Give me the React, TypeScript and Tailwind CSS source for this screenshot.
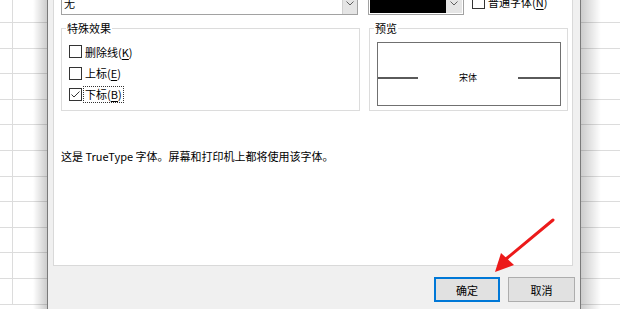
import React from 'react';

const ROWS = Array.from({ length: 11 });

const SheetStrip: React.FC<{ side: 'left' | 'right' }> = ({ side }) => (
    <div className={`relative h-full overflow-hidden bg-white ${side === 'left' ? 'w-[47px]' : 'flex-1'}`}>
        <div className="flex flex-col">
            <div className="flex h-[23px] border-b border-[#dcdcdc]">
                {side === 'left' && <div className="w-[13px] border-r border-[#dcdcdc]" />}
            </div>
            {ROWS.map((_, i) => (
                <div key={i} className="flex h-[25.6px] border-b border-[#dcdcdc]">
                    {side === 'left' && <div className="w-[13px] border-r border-[#dcdcdc]" />}
                </div>
            ))}
        </div>
        {/* dialog drop shadow over the grid */}
        {side === 'left' ? (
            <div className="absolute inset-y-0 right-0 w-[14px] bg-gradient-to-r from-transparent to-black/20" />
        ) : (
            <div className="absolute inset-y-0 left-0 w-[20px] bg-gradient-to-r from-black/20 to-transparent" />
        )}
    </div>
);

const Key: React.FC<{ k: string }> = ({ k }) => (
    <span>
        (<span className="underline underline-offset-2">{k}</span>)
    </span>
);

const CheckBox: React.FC<{ checked?: boolean }> = ({ checked }) => (
    <div className="w-[13px] h-[13px] shrink-0 border border-[#333333] bg-white">
        {checked && (
            <svg width="11" height="11" viewBox="0 0 11 11">
                <polyline points="1.5,5.5 4,8 9.5,2.5" fill="none" stroke="#333333" strokeWidth="1" />
            </svg>
        )}
    </div>
);

const Chevron = () => (
    <svg width="8" height="5" viewBox="0 0 8 5">
        <polyline points="0.5,0.5 4,4 7.5,0.5" fill="none" stroke="#606060" strokeWidth="1" />
    </svg>
);

const App: React.FC = () => {
    return (
        <div className="relative flex w-[620px] h-[309px] overflow-hidden bg-white text-[11px] text-black font-['Noto_Sans_CJK_SC',sans-serif]">
            <SheetStrip side="left" />

            {/* Font dialog */}
            <div className="flex flex-col w-[534px] h-full shrink-0 border-x border-[#7a7a7a] bg-[#f0f0f0]">
                <div className="ml-[5px] mr-[7px] h-[266px] border-x border-b border-[#d9d9d9] bg-white pl-[7px] flex flex-col">
                    {/* top row: underline / colour / normal font */}
                    <div className="flex items-start mt-[-8px] h-[23px]">
                        <div className="flex w-[297px] h-[23px] border border-[#a2a2a2] bg-white">
                            <div className="flex-1 pl-[2px] pt-[4px] leading-[12px]">无</div>
                            <div className="w-[15px] h-full bg-[#e5e5e5] border-l border-[#d0d0d0] flex justify-center pt-[8px]">
                                <Chevron />
                            </div>
                        </div>
                        <div className="ml-[10px] flex w-[96px] h-[23px] border border-[#a2a2a2] bg-white p-[1px]">
                            <div className="flex-1 bg-black" />
                            <div className="w-[16px] h-full bg-[#e5e5e5] flex justify-center pt-[7px]">
                                <Chevron />
                            </div>
                        </div>
                        <div className="ml-[8px] h-[20px] flex items-center gap-[3px]">
                            <CheckBox />
                            <span className="leading-[14px]">普通字体<Key k="N" /></span>
                        </div>
                    </div>

                    {/* group boxes */}
                    <div className="flex mt-[6px]">
                        <fieldset className="w-[299px] h-[90px] border border-[#dcdcdc]">
                            <legend className="ml-[4px] px-[1px] leading-[14px]">特殊效果</legend>
                            <div className="flex flex-col pl-[7px] pt-[6px]">
                                <div className="h-[21px] flex items-center gap-[2px]">
                                    <CheckBox />
                                    <span className="px-[1px] leading-[14px]">删除线<Key k="K" /></span>
                                </div>
                                <div className="h-[22px] flex items-center gap-[2px]">
                                    <CheckBox />
                                    <span className="px-[1px] leading-[14px]">上标<Key k="E" /></span>
                                </div>
                                <div className="h-[21px] flex items-center gap-[1px]">
                                    <CheckBox checked />
                                    <span className="border border-dotted border-[#333333] px-[1px] leading-[15px]">下标<Key k="B" /></span>
                                </div>
                            </div>
                        </fieldset>
                        <fieldset className="ml-[9px] w-[199px] h-[90px] border border-[#dcdcdc]">
                            <legend className="ml-[4px] px-[1px] leading-[14px]">预览</legend>
                            <div className="ml-[7px] mt-[7px] w-[184px] h-[64px] border border-[#707070] bg-white flex items-center pt-[8px]">
                                <div className="w-[40px] h-[2px] bg-[#5a5a5a]" />
                                <div className="flex-1 text-center text-[9px] leading-[10px]">宋体</div>
                                <div className="w-[42px] h-[2px] bg-[#5a5a5a]" />
                            </div>
                        </fieldset>
                    </div>

                    <p className="mt-[38px] leading-[14px]">这是 TrueType 字体。屏幕和打印机上都将使用该字体。</p>
                </div>

                {/* dialog buttons */}
                <div className="flex justify-end gap-[8px] mt-[11px] pr-[5px]">
                    <button className="w-[66px] h-[25px] border-2 border-[#0078d7] bg-[#e1e1e1] leading-[14px]">确定</button>
                    <button className="w-[67px] h-[25px] border border-[#adadad] bg-[#e1e1e1] leading-[14px]">取消</button>
                </div>
            </div>

            <SheetStrip side="right" />

            {/* red annotation arrow */}
            <svg className="absolute left-0 top-0 pointer-events-none" width="620" height="309" viewBox="0 0 620 309">
                <line x1="553" y1="220" x2="506" y2="259" stroke="#ec1a1a" strokeWidth="3" strokeLinecap="round" />
                <polygon points="495,272 501,253 514,265" fill="#ec1a1a" />
            </svg>
        </div>
    );
};

export default App;
